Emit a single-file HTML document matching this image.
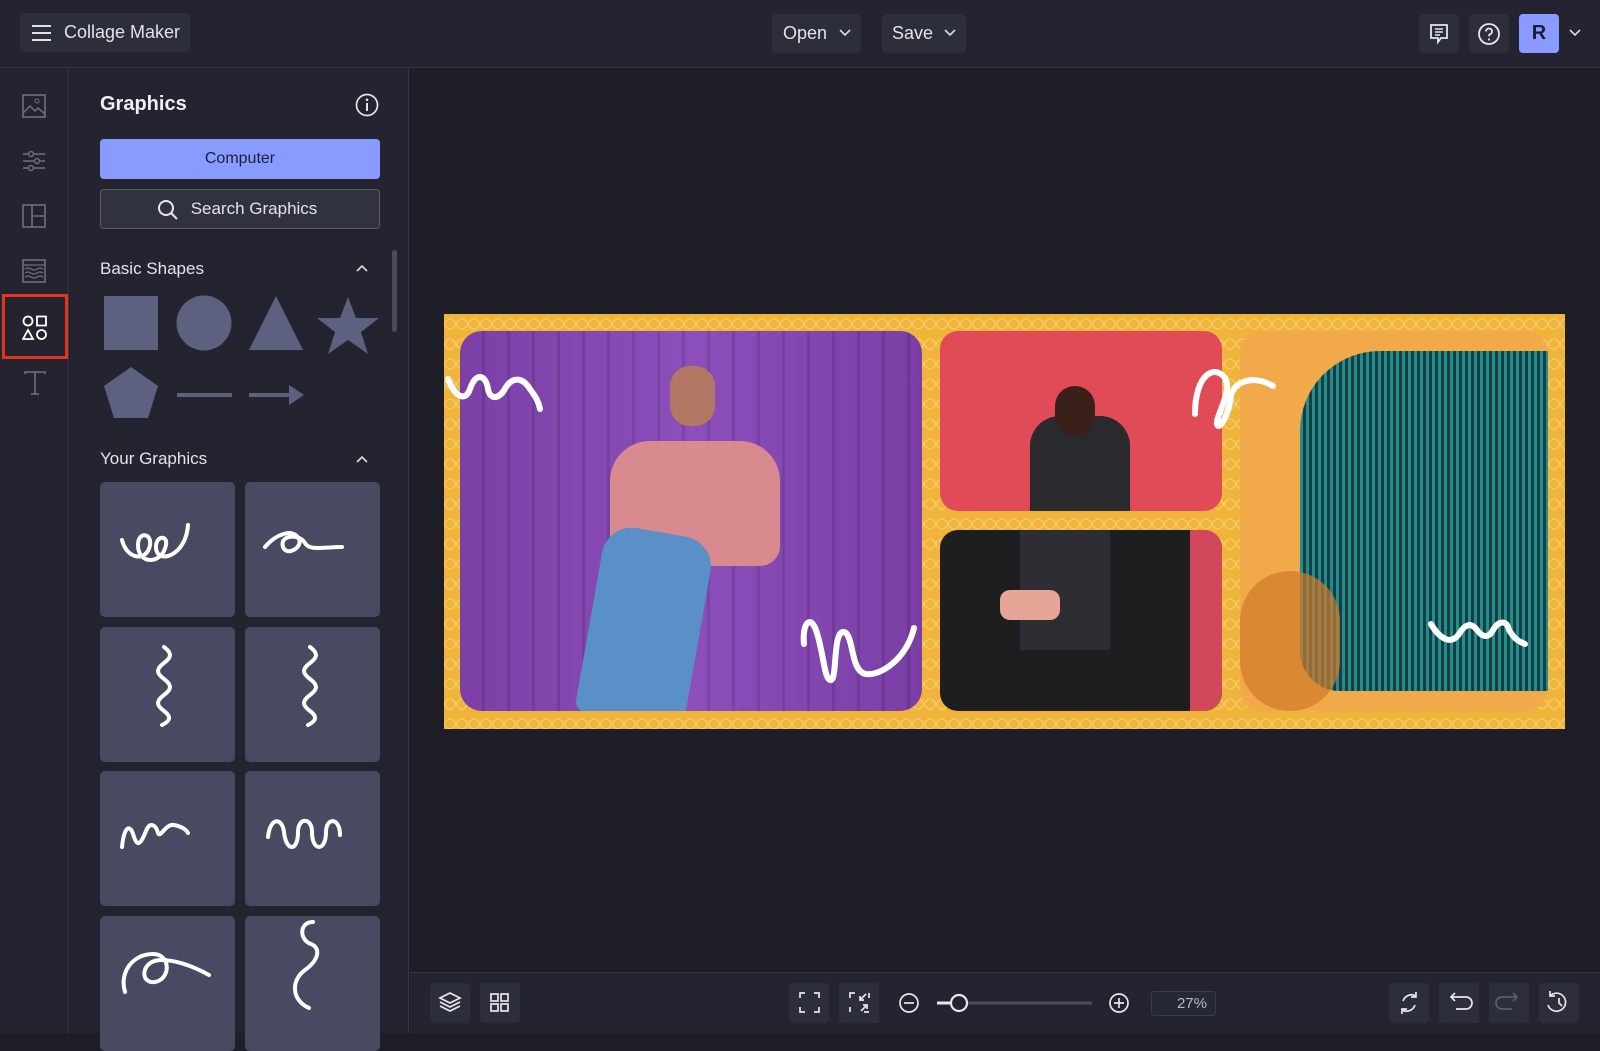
<!DOCTYPE html>
<html><head><meta charset="utf-8"><style>
*{margin:0;padding:0;box-sizing:border-box}
body{width:1600px;height:1033px;background:#1d1e28;font-family:"Liberation Sans",sans-serif;position:relative;overflow:hidden;color:#e6e7ef}
.a{position:absolute}
.btn{position:absolute;background:#2c2e3a;border-radius:4px;color:#e2e3ea;font-size:18px;display:flex;align-items:center;justify-content:center}
.tile{position:absolute;width:135px;height:135px;background:#474a60;border-radius:5px}
.bb{position:absolute;top:983px;width:40px;height:40px;background:#2c2e3a;border-radius:4px}
svg{position:absolute}
</style></head><body>
<!-- top bar -->
<div class="a" style="left:0;top:0;width:1600px;height:68px;background:#23242f;border-bottom:1px solid #353745"></div>
<div class="btn" style="left:20px;top:13px;width:170px;height:39px;justify-content:flex-start;padding-left:44px">Collage Maker</div>
<svg style="left:31px;top:24px" width="22" height="18"><path d="M1 2H20M1 9H20M1 16H20" stroke="#dfe0e8" stroke-width="2"/></svg>
<div class="btn" style="left:772px;top:14px;width:89px;height:39px;justify-content:flex-start;padding-left:11px">Open<svg style="left:67px;top:15px" width="12" height="8"><path d="M1 1L6 6L11 1" stroke="#ddd" stroke-width="1.6" fill="none"/></svg></div>
<div class="btn" style="left:882px;top:14px;width:84px;height:39px;justify-content:flex-start;padding-left:10px">Save<svg style="left:62px;top:15px" width="12" height="8"><path d="M1 1L6 6L11 1" stroke="#ddd" stroke-width="1.6" fill="none"/></svg></div>
<div class="btn" style="left:1419px;top:14px;width:40px;height:39px"><svg style="left:10px;top:9px" width="20" height="22"><path d="M2 2H18V15H12L9 19V15H2Z" stroke="#e5e6ee" stroke-width="1.8" fill="none"/><path d="M6 6H14M6 9H14M6 12H11" stroke="#e5e6ee" stroke-width="1.5"/></svg></div>
<div class="btn" style="left:1469px;top:14px;width:40px;height:39px"><svg style="left:8px;top:8px" width="24" height="24"><circle cx="12" cy="12" r="10" stroke="#e5e6ee" stroke-width="1.8" fill="none"/><path d="M9 9.5a3 3 0 1 1 4 2.8c-1 .4-1 1-1 2" stroke="#e5e6ee" stroke-width="1.8" fill="none"/><circle cx="12" cy="17.5" r="1.1" fill="#e5e6ee"/></svg></div>
<div class="btn" style="left:1519px;top:14px;width:40px;height:39px;background:#8a9bff;color:#1a1c35;font-weight:bold;font-size:20px">R</div>
<svg style="left:1569px;top:29px" width="12" height="8"><path d="M1 1L6 6L11 1" stroke="#ddd" stroke-width="1.6" fill="none"/></svg>

<!-- left rail -->
<div class="a" style="left:0;top:69px;width:69px;height:964px;background:#23242f;border-right:1px solid #353745"></div>
<svg style="left:22px;top:94px" width="24" height="24"><rect x="1" y="1" width="22" height="22" stroke="#6c6e85" stroke-width="1.6" fill="none"/><path d="M1 19L8 12L13 17L16 14L23 20" stroke="#6c6e85" stroke-width="1.5" fill="none"/><circle cx="15" cy="7" r="2" stroke="#6c6e85" fill="none"/></svg>
<svg style="left:22px;top:149px" width="24" height="24"><path d="M1 5H23M1 12H23M1 19H23" stroke="#6c6e85" stroke-width="1.5"/><circle cx="9" cy="5" r="2.5" fill="#23242f" stroke="#6c6e85" stroke-width="1.5"/><circle cx="15" cy="12" r="2.5" fill="#23242f" stroke="#6c6e85" stroke-width="1.5"/><circle cx="9" cy="19" r="2.5" fill="#23242f" stroke="#6c6e85" stroke-width="1.5"/></svg>
<svg style="left:22px;top:204px" width="24" height="24"><rect x="1" y="1" width="22" height="22" stroke="#6c6e85" stroke-width="1.6" fill="none"/><path d="M10 1V23M10 12H23" stroke="#6c6e85" stroke-width="1.6"/></svg>
<svg style="left:22px;top:259px" width="24" height="24"><rect x="1" y="1" width="22" height="22" stroke="#6c6e85" stroke-width="1.6" fill="none"/><path d="M1 6H23M3 10q3-2 6 0t6 0t6 0M3 14q3-2 6 0t6 0t6 0M3 18q3-2 6 0t6 0t6 0" stroke="#6c6e85" stroke-width="1.3" fill="none"/></svg>
<div class="a" style="left:2px;top:294px;width:66px;height:65px;border:3px solid #e8321e"></div>
<svg style="left:22px;top:315px" width="26" height="26"><circle cx="6" cy="6" r="4.5" stroke="#fff" stroke-width="1.8" fill="none"/><rect x="15" y="1.5" width="9" height="9" stroke="#fff" stroke-width="1.8" fill="none"/><path d="M6 15L11 24H1Z" stroke="#fff" stroke-width="1.8" fill="none"/><circle cx="19.5" cy="19.5" r="4.5" stroke="#fff" stroke-width="1.8" fill="none"/></svg>
<svg style="left:23px;top:371px" width="24" height="24"><path d="M2 3V1H22V3M12 1V23M8 23H16" stroke="#6c6e85" stroke-width="1.6" fill="none"/></svg>

<!-- panel -->
<div class="a" style="left:70px;top:69px;width:339px;height:964px;background:#23242f;border-right:1px solid #353745"></div>
<div class="a" style="left:100px;top:93px;font-size:20px;font-weight:bold;color:#f0f1f6">Graphics</div>
<svg style="left:355px;top:93px" width="24" height="24"><circle cx="12" cy="12" r="10.5" stroke="#e5e6ee" stroke-width="1.7" fill="none"/><path d="M12 10V18" stroke="#e5e6ee" stroke-width="2"/><circle cx="12" cy="6.8" r="1.3" fill="#e5e6ee"/></svg>
<div class="btn" style="left:100px;top:139px;width:280px;height:40px;background:#8a9bff;color:#1b1f3b;font-size:16px">Computer</div>
<div class="btn" style="left:100px;top:189px;width:280px;height:40px;background:#30323f;border:1px solid #5a5c6c;font-size:17px;padding-left:28px">Search Graphics</div>
<svg style="left:157px;top:199px" width="22" height="22"><circle cx="9" cy="9" r="7" stroke="#e5e6ee" stroke-width="2" fill="none"/><path d="M14 14L20 20" stroke="#e5e6ee" stroke-width="2"/></svg>
<div class="a" style="left:100px;top:259px;font-size:17px;color:#e3e4ec">Basic Shapes</div>
<svg style="left:356px;top:264px" width="12" height="8"><path d="M1 7L6 2L11 7" stroke="#ddd" stroke-width="1.6" fill="none"/></svg>
<div class="a" style="left:392px;top:250px;width:5px;height:82px;background:#4a4c5e;border-radius:3px"></div>
<svg style="left:100px;top:294px" width="290" height="130">
<rect x="4" y="2" width="54" height="54" fill="#5d607e"/>
<circle cx="104" cy="29" r="27.5" fill="#5d607e"/>
<path d="M176 2L203 56H149Z" fill="#5d607e"/>
<path d="M248 3L256 24H279L261 38L268 60L248 46L228 60L235 38L217 24H240Z" fill="#5d607e"/>
<path d="M31 73L58 92L48 124H14L4 92Z" fill="#5d607e"/>
<rect x="77" y="99" width="55" height="4" fill="#5d607e"/>
<rect x="149" y="99" width="40" height="4" fill="#5d607e"/><path d="M189 91L204 101L189 111Z" fill="#5d607e"/>
</svg>
<div class="a" style="left:100px;top:449px;font-size:17px;color:#e3e4ec">Your Graphics</div>
<svg style="left:356px;top:455px" width="12" height="8"><path d="M1 7L6 2L11 7" stroke="#ddd" stroke-width="1.6" fill="none"/></svg>
<div class="tile" style="left:100px;top:482px"></div><div class="tile" style="left:245px;top:482px"></div>
<div class="tile" style="left:100px;top:627px"></div><div class="tile" style="left:245px;top:627px"></div>
<div class="tile" style="left:100px;top:771px"></div><div class="tile" style="left:245px;top:771px"></div>
<div class="tile" style="left:100px;top:916px"></div><div class="tile" style="left:245px;top:916px"></div>
<svg style="left:100px;top:482px" width="285" height="560" fill="none" stroke="#fff" stroke-width="4" stroke-linecap="round">
<path d="M22 58c5 20 25 22 28 5c2-12-12-14-12 0c0 20 24 20 28 0c2-10-10-10-10 2c0 18 30 10 32-22"/>
<path d="M165 65c10-12 28-20 34-8c4 8-12 18-16 8c-4-12 16-14 22-4c4 8 18 4 37 4"/>
<path d="M64 165c8 6 8 10 0 16c-8 6-8 10 0 16c8 6 8 10 0 16c-8 6-8 10 0 16c8 6 6 10-2 14"/>
<path d="M210 165c8 6 8 10 0 16c-8 6-8 10 0 16c8 6 8 10 0 16c-8 6-8 10 0 16c8 6 6 10-2 14"/>
<path d="M22 365c2-20 8-25 12-10c4 12 8 4 12-6c4-10 10-6 12 2c2 6 8-10 16-8c6 1 12 4 14 8"/>
<path d="M168 355c2-20 14-20 16-5c2 20 14 20 14 0c0-15 14-15 14 0c0 20 14 20 14 0c0-15 14-15 14 3"/>
<path d="M25 510c-6-20 8-38 28-38c18 0 18 25 2 28c-16 2-14-22 6-22c12 0 28 4 48 15"/>
<path d="M213 440c-14 0-14 18-2 22c10 4 8 16-6 26c-14 10-14 30 4 38"/>
</svg>

<!-- collage -->
<div class="a" style="left:444px;top:314px;width:1121px;height:415px;background:#f0b43a"></div>
<svg style="left:444px;top:314px" width="1121" height="415"><defs><pattern id="p" width="24" height="20" patternUnits="userSpaceOnUse"><path d="M0 10q6-10 12 0t12 0M0 10q6 10 12 0t12 0" stroke="#f7d27a" stroke-width="1" fill="none"/></pattern></defs><rect width="1121" height="415" fill="url(#p)"/></svg>
<div class="a" style="left:460px;top:331px;width:462px;height:380px;border-radius:22px;background:linear-gradient(90deg,#7b3fa6,#8c4fbb 50%,#7a3ea6);overflow:hidden">
<div class="a" style="left:0;top:0;width:100%;height:100%;background:repeating-linear-gradient(90deg,transparent 0 22px,rgba(0,0,0,.12) 22px 25px)"></div>
<div class="a" style="left:150px;top:110px;width:170px;height:125px;background:#d98a8e;border-radius:40px 40px 20px 20px"></div>
<div class="a" style="left:210px;top:35px;width:45px;height:60px;background:#b37863;border-radius:20px"></div>
<div class="a" style="left:130px;top:200px;width:110px;height:190px;background:#5a8fc7;border-radius:30px 30px 10px 10px;transform:rotate(10deg)"></div>
</div>
<div class="a" style="left:940px;top:331px;width:282px;height:180px;border-radius:18px;background:#e14a57;overflow:hidden">
<div class="a" style="left:90px;top:85px;width:100px;height:110px;background:#2a2a2e;border-radius:30px 30px 0 0"></div>
<div class="a" style="left:115px;top:55px;width:40px;height:50px;background:#3a2018;border-radius:20px"></div>
</div>
<div class="a" style="left:940px;top:530px;width:282px;height:181px;border-radius:18px;background:#1e1d20;overflow:hidden">
<div class="a" style="left:250px;top:0;width:40px;height:181px;background:#d0485a"></div>
<div class="a" style="left:80px;top:0;width:90px;height:120px;background:#2e2d33"></div>
<div class="a" style="left:60px;top:60px;width:60px;height:30px;background:#e7a597;border-radius:10px"></div>
</div>
<div class="a" style="left:1240px;top:331px;width:308px;height:380px;border-radius:22px;background:#f2a94a;overflow:hidden">
<div class="a" style="left:60px;top:20px;width:260px;height:340px;background:repeating-linear-gradient(90deg,#1f8f8c 0 3px,#1a3d45 3px 6px);border-radius:80px 0 0 40px"></div>
<div class="a" style="left:0;top:240px;width:100px;height:140px;background:#d27a2b;opacity:.7;border-radius:60px"></div>
</div>
<svg style="left:444px;top:314px" width="1121" height="415" fill="none" stroke="#fff" stroke-width="6" stroke-linecap="round">
<path d="M4 65c8 20 18 22 22 10c6-18 16-14 18 0c2 12 12 10 18-2c8-12 18-8 24 2c4 6 8 10 10 20"/>
<path d="M360 330c-2-20 6-30 12-14c8 24 8 48 14 50c8 3 2-50 14-48c10 2 6 40 22 42c14 2 40-14 48-46"/>
<path d="M751 100c0-40 20-50 30-36c8 12-10 40-8 46c2 8 12-10 14-28c2-14 22-22 42-10"/>
<path d="M987 310c8 14 20 22 28 10c6-10 12-12 18-4c6 8 12 8 16 0c6-10 14-10 16 0c4 6 6 10 16 14"/>
</svg>

<!-- bottom bar -->
<div class="a" style="left:410px;top:972px;width:1190px;height:61px;background:#23242f;border-top:1px solid #353745"></div>
<div class="bb" style="left:430px"></div><div class="bb" style="left:480px"></div>
<div class="bb" style="left:789px"></div><div class="bb" style="left:839px"></div>
<div class="bb" style="left:1389px"></div><div class="bb" style="left:1439px"></div><div class="bb" style="left:1489px"></div><div class="bb" style="left:1539px"></div>
<div class="a" style="left:1151px;top:991px;width:65px;height:25px;border:1px solid #3a3c4a;border-radius:3px;background:#262834;color:#b8b9c4;font-size:15px;text-align:right;padding-right:8px;line-height:23px">27%</div>
<svg style="left:400px;top:980px" width="1200" height="50" fill="none" stroke="#e5e6ee" stroke-width="1.7">
<path d="M50 13L60 18L50 23L40 18Z M40 22L50 27L60 22 M40 26L50 31L60 26"/>
<rect x="91" y="14" width="7" height="7"/><rect x="101" y="14" width="7" height="7"/><rect x="91" y="24" width="7" height="7"/><rect x="101" y="24" width="7" height="7"/>
<path d="M400 18V13H405M414 13H419V18M419 27V32H414M405 32H400V27"/>
<path d="M450 18V13H455M469 13V18M450 27V32M469 32H464M466 14L460 20M460 16V20H464M461 31L467 25M467 29V25H463"/>
<circle cx="509" cy="23" r="9"/><path d="M504 23H514"/>
<path d="M537 23H552" stroke-width="3"/><path d="M568 23H692" stroke="#4a4c5c" stroke-width="3"/>
<circle cx="559" cy="23" r="8" fill="#23242f" stroke-width="2.2"/>
<circle cx="719" cy="23" r="9"/><path d="M714 23H724M719 18V28"/>
<path d="M1016 16a9 9 0 0 0-13 5M1002 30a9 9 0 0 0 13-5M1016 12V17H1011M1002 34V29H1007"/>
<path d="M1052 17H1066a6 6 0 0 1 0 12H1056M1055 13L1051 17L1055 21"/>
<path d="M1116 17H1102a6 6 0 0 0 0 12H1112M1113 13L1117 17L1113 21" stroke="#5a5c6c"/>
<path d="M1150 16a9 9 0 1 1-2 9M1150 11V16H1155M1159 18V23L1162 26"/>
</svg>
</body></html>
